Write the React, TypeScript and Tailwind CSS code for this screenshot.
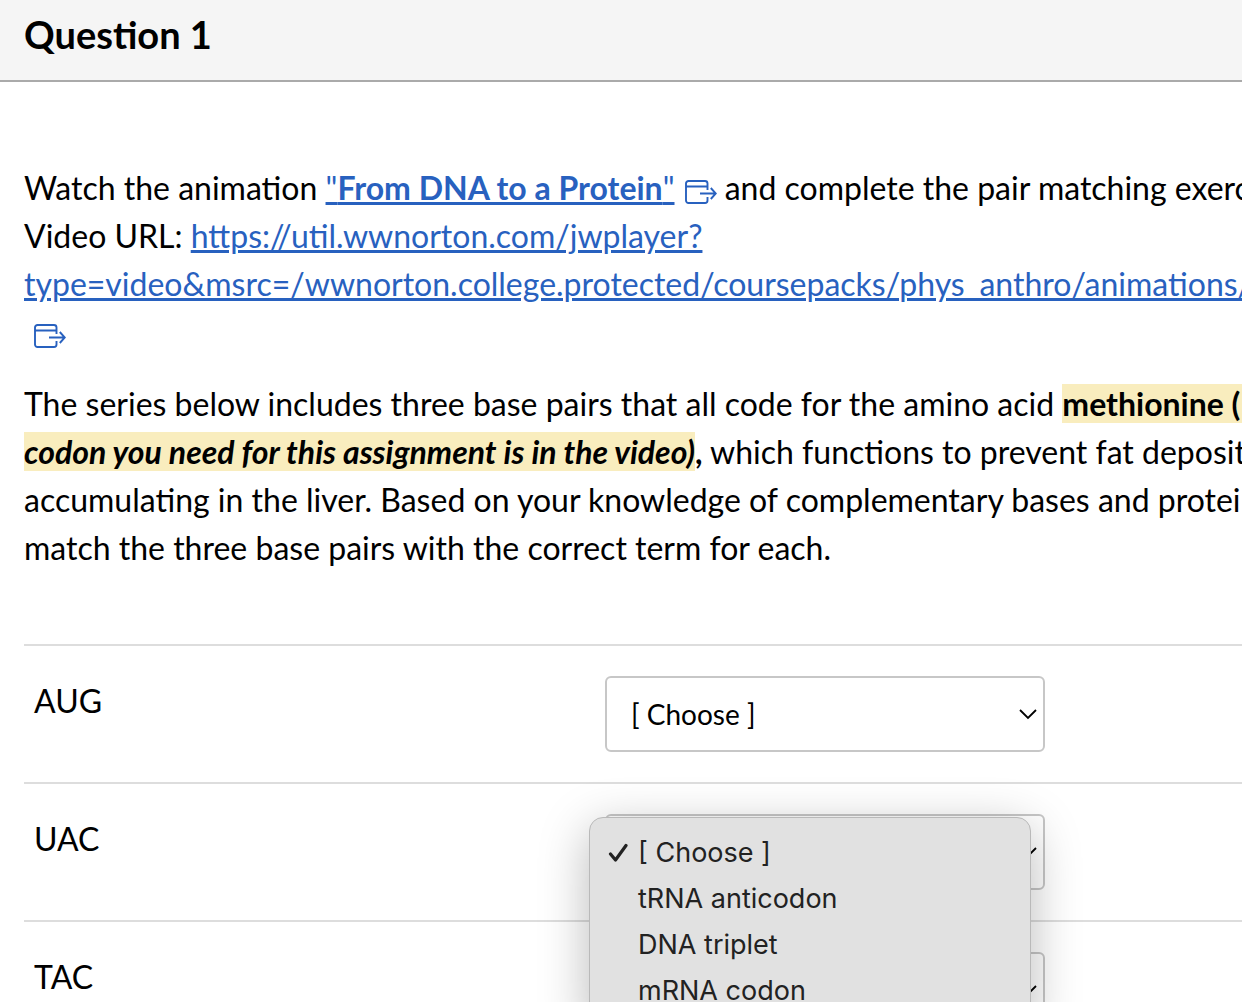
import React from "react";

function ExternalIcon() {
  return (
    <svg viewBox="0 0 32 24" className="ml-[10px] inline-block h-6 w-8 align-[-4px]" fill="none" stroke="#2861bf" strokeWidth="1.9" aria-hidden="true">
      <path d="M22.5 10V3.5A2.5 2.5 0 0 0 20 1H3.5A2.5 2.5 0 0 0 1 3.5v17A2.5 2.5 0 0 0 3.5 23H20a2.5 2.5 0 0 0 2.5-2.5V17M1 6.5h21.5M15 13.5h15.5M25.8 8l5 5.5-5 5.5" />
    </svg>
  );
}

const options = ["[ Choose ]", "tRNA anticodon", "DNA triplet", "mRNA codon"];

function MatchRow({ term, open = false }: { term: string; open?: boolean }) {
  const id = "match-" + term;
  return (
    <div className="relative flex h-[138px] items-start border-t-2 border-[#dddddd] pt-[30px]">
      <label htmlFor={id} className="w-[581px] shrink-0 pl-[10px] leading-[50px]">{term}</label>
      <div className="relative w-[440px] shrink-0">
        <select id={id} className="h-[76px] w-full appearance-none rounded-[6px] border-2 border-[#c7c7c7] bg-white pl-6 text-[28px] text-black">
          {options.map((o) => <option key={o}>{o}</option>)}
        </select>
        <svg viewBox="0 0 20 12" className="pointer-events-none absolute top-8 right-[7px] h-3 w-5" fill="none" stroke="#000" strokeWidth="1.8" aria-hidden="true"><path d="M2 2l8 8 8-8" /></svg>
      </div>
      {open && (
        <ul role="listbox" aria-label="Answer choices" className="absolute top-[33px] left-[565px] z-10 w-[442px] rounded-[14px] border border-[#b9b9b9] bg-[#e1e1e1] py-3 font-['Inter',sans-serif] text-[27px] leading-[46px] text-[#222] shadow-[0_12px_50px_rgba(0,0,0,0.28)]">
          {options.map((o, i) => (
            <li key={o} role="option" aria-selected={i === 0} className="relative pl-12">
              {i === 0 && <svg viewBox="0 0 20 20" className="absolute top-[13px] left-[18px] h-5 w-5" fill="none" stroke="#222" strokeWidth="3.2" strokeLinecap="round" strokeLinejoin="round" aria-hidden="true"><path d="M2.5 11l5 6L18 2.5" /></svg>}
              {o}
            </li>
          ))}
        </ul>
      )}
    </div>
  );
}

export default function App() {
  return (
    <main className="h-screen overflow-hidden bg-white font-['Lato',sans-serif] text-[32px] leading-[48px] text-black">
      <header className="border-b-2 border-[#aaaaaa] bg-[#f5f5f5] px-6 pt-[10px] pb-[22px]">
        <h1 className="text-[38px] leading-[48px] font-bold">Question 1</h1>
      </header>
      <section className="px-6 pt-[82px] whitespace-nowrap">
        <p>
          Watch the animation <a href="#video" className="text-[#2861bf] underline decoration-[3px]">"<strong>From DNA to a Protein</strong>"</a><ExternalIcon /> and complete the pair matching exerc<br />
          Video URL: <a href="#url" className="text-[#2861bf] underline decoration-[3px]">https://util.wwnorton.com/jwplayer?<br />type=video&amp;msrc=/wwnorton.college.protected/coursepacks/phys_anthro/animations/</a><br />
          <ExternalIcon />
        </p>
        <p className="mt-6">
          The series below includes three base pairs that all code for the amino acid <strong className="bg-[#f9edbe] pr-6">methionine (</strong><br />
          <strong><em className="bg-[#f9edbe]">codon you need for this assignment is in the video)</em>,</strong> which functions to prevent fat deposit<br />
          accumulating in the liver. Based on your knowledge of complementary bases and protei<br />
          match the three base pairs with the correct term for each.
        </p>
      </section>
      <form className="mt-[72px] ml-6">
        <MatchRow term="AUG" />
        <MatchRow term="UAC" open />
        <MatchRow term="TAC" />
      </form>
    </main>
  );
}
